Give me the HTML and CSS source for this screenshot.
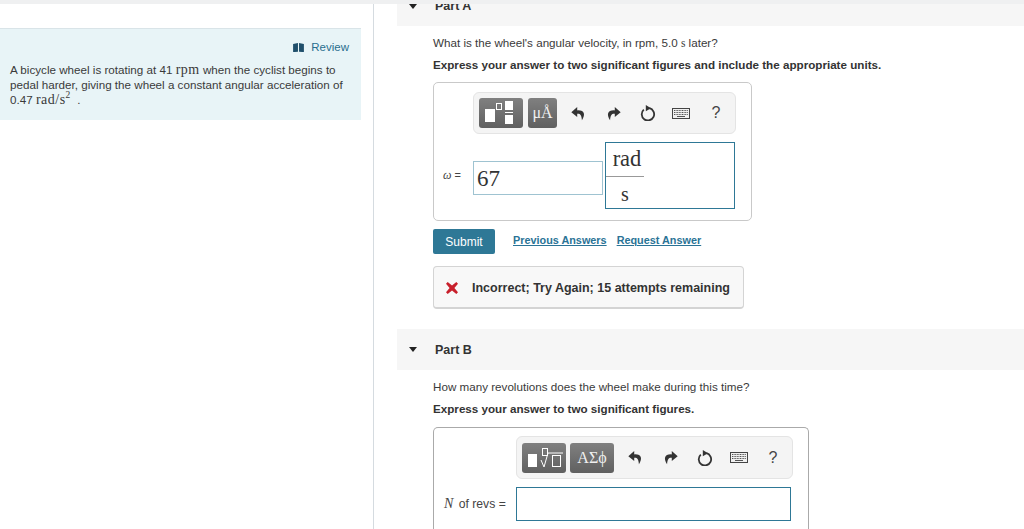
FILE: index.html
```html
<!DOCTYPE html>
<html lang="en">
<head>
<meta charset="utf-8">
<title>Bicycle wheel</title>
<link rel="stylesheet" href="styles.css">
</head>
<body>
<svg class="defs" width="0" height="0" aria-hidden="true">
  <symbol id="undo" viewBox="0 0 14 14"><path d="M5.8 1 0.3 5.8 5.8 10.2V7.3C8.6 7 9.8 8.6 10.2 13.2 13.8 8.2 12.6 3.6 5.8 4.1Z"/></symbol>
  <symbol id="redo" viewBox="0 0 14 14"><path d="M8.2 1 13.7 5.8 8.2 10.2V7.3C5.4 7 4.2 8.6 3.8 13.2 0.2 8.2 1.4 3.6 8.2 4.1Z"/></symbol>
  <symbol id="reset" viewBox="0 0 16 16"><path class="ring" d="M9.4 3.2A6.2 6.2 0 1 1 3.8 4.6"/><path d="M5.8 0 11 3.3 5.8 6.2Z"/></symbol>
  <symbol id="keys" viewBox="0 0 18 11"><rect class="kb" x="0.5" y="0.5" width="17" height="10"/><path class="kr" d="M2 2.5H16M2 4.5H16M2 6.5H16"/><path class="ks" d="M5 8.5H13"/></symbol>
</svg>
<div class="page">
  <aside class="left">
    <section class="intro">
      <div class="review"><svg class="book" viewBox="0 0 12 10"><path d="M0 1 5.4 0V9.6L0 10.2ZM6.6 0 12 1V10.2L6.6 9.6Z"/></svg><span>Review</span></div>
      <p class="problem">A bicycle wheel is rotating at 41 <span class="math">rpm</span> when the cyclist begins to pedal harder, giving the wheel a constant angular acceleration of 0.47 <span class="math">rad/s<sup>2</sup></span> &nbsp;.</p>
    </section>
  </aside>
  <main class="right">
    <header class="part part-a"><span class="caret"></span><h2>Part A</h2></header>
    <div class="body body-a">
      <p class="q">What is the wheel's angular velocity, in rpm, 5.0 <span class="math">s</span> later?</p>
      <p class="req">Express your answer to two significant figures and include the appropriate units.</p>
      <div class="answer answer-a">
        <div class="tools tools-a">
          <span class="tbtn btn-frac"><svg width="44" height="30" viewBox="0 0 44 30"><rect class="w" x="6" y="11" width="10" height="13"/><rect class="o" x="17.5" y="5.5" width="5" height="6"/><rect class="w" x="26" y="3" width="8" height="9"/><rect class="w" x="26" y="14" width="8" height="1"/><rect class="w" x="26" y="17" width="8" height="9"/></svg></span>
          <span class="tbtn btn-sym">μÅ</span>
          <span class="acts">
            <svg class="ic"><use href="#undo"/></svg>
            <svg class="ic"><use href="#redo"/></svg>
            <svg class="ic ic-r"><use href="#reset"/></svg>
            <svg class="ic-k"><use href="#keys"/></svg>
            <span class="help">?</span>
          </span>
        </div>
        <div class="entry">
          <span class="lbl lbl-w"><i>ω</i> =</span>
          <span class="val">67</span>
          <div class="units">
            <span class="fr"><span class="num">rad</span><span class="den">s</span></span>
          </div>
        </div>
      </div>
      <div class="actions">
        <button class="submit" type="button">Submit</button>
        <a class="lnk" href="#">Previous Answers</a>
        <a class="lnk" href="#">Request Answer</a>
      </div>
      <div class="fb"><svg class="x" viewBox="0 0 12 12"><path d="M1.7 0 6 3.6 10.3 0 12 1.8 8.4 6 12 10.2 10.3 12 6 8.4 1.7 12 0 10.2 3.6 6 0 1.8Z"/></svg><strong>Incorrect; Try Again; 15 attempts remaining</strong></div>
    </div>
    <header class="part part-b"><span class="caret"></span><h2>Part B</h2></header>
    <div class="body body-b">
      <p class="q">How many revolutions does the wheel make during this time?</p>
      <p class="req">Express your answer to two significant figures.</p>
      <div class="answer answer-b">
        <div class="tools tools-b">
          <span class="tbtn btn-frac"><svg width="44" height="30" viewBox="0 0 44 30"><rect class="w" x="6" y="11" width="9" height="13"/><rect class="o" x="20.5" y="5.5" width="5" height="7"/><path class="o" d="M19 17 22 24 26 10H41"/><rect class="o" x="30.5" y="12.5" width="8" height="11"/></svg></span>
          <span class="tbtn btn-sym btn-greek">ΑΣϕ</span>
          <span class="acts">
            <svg class="ic"><use href="#undo"/></svg>
            <svg class="ic"><use href="#redo"/></svg>
            <svg class="ic ic-r"><use href="#reset"/></svg>
            <svg class="ic-k"><use href="#keys"/></svg>
            <span class="help">?</span>
          </span>
        </div>
        <div class="entry entry-b">
          <span class="lbl lbl-n"><i class="n">N</i> of revs =</span>
          <span class="val val-b"></span>
        </div>
      </div>
    </div>
  </main>
</div>
</body>
</html>
```
FILE: styles.css
```css
* { box-sizing: border-box; }
html, body { margin: 0; height: 529px; overflow: hidden; background: #fff; }
body { font-family: "Liberation Sans", Arial, sans-serif; color: #333; font-size: 11.65px; }
.defs { display: block; height: 0; }
p, h2 { margin: 0; }
.page { display: flex; height: 529px; border-top: 4px solid #eff0f1; }
.left { width: 374px; flex: none; padding-top: 24px; border-right: 1px solid #d5dbe0; }
.intro { width: 361px; height: 92px; background: #e8f4f7; border-top: 1px solid #d9e4e8; padding: 11px 12px 0 10px; }
.review { display: flex; justify-content: flex-end; align-items: center; gap: 7px; color: #2a6f8f; height: 14px; font-size: 11.5px; }
.book { width: 11px; height: 9px; fill: #1f4f6b; }
.problem { margin-top: 9px; line-height: 14.8px; font-size: 11.65px; width: 340px; color: #3a3a3a; }
.math { font-family: "Liberation Serif", "DejaVu Serif", serif; font-size: 14px; letter-spacing: .5px; line-height: 1; }
sup { font-size: 9.5px; line-height: 0; }
.right { flex: 1; min-width: 0; padding-left: 23px; }
.part { display: flex; align-items: center; background: #f6f6f6; color: #333; }
.part h2 { font-size: 12.5px; font-weight: bold; margin-left: 18px; }
.caret { width: 0; height: 0; border-left: 4.5px solid transparent; border-right: 4.5px solid transparent; border-top: 5px solid #222; margin-left: 12px; }
.part-a { height: 22px; overflow: hidden; align-items: flex-start; }
.part-a h2 { margin-top: -5px; }
.part-b { height: 41px; margin-top: 20px; }
.body { padding-left: 36px; }
.body-a { padding-top: 10px; }
.q { font-size: 11.65px; line-height: 14px; color: #3a3a3a; }
.q .math { font-size: 11.5px; letter-spacing: 0; }
.req { font-size: 11.65px; font-weight: bold; line-height: 14px; margin-top: 8px; color: #333; }
.answer { border: 1px solid #c9c9c9; border-radius: 5px; background: #fff; }
.answer-a { width: 319px; height: 139px; margin-top: 10px; padding: 9px 0 0 39px; }
.tools { display: flex; align-items: center; height: 42px; background: #f4f4f4; border: 1px solid #e4e4e4; border-radius: 6px; padding-left: 5px; gap: 5px; }
.tools-a { width: 263px; }
.tbtn { display: flex; align-items: center; justify-content: center; height: 30px; border-radius: 3px; background: linear-gradient(#808080, #606060); color: #f0f0f0; }
.btn-frac { width: 44px; }
.btn-sym { width: 29px; font-family: "Liberation Serif", serif; font-size: 16px; }
.btn-greek { width: 44px; }
.w { fill: #fff; }
.o { fill: none; stroke: #fff; stroke-width: 1; }
.acts { display: flex; align-items: center; margin-left: 9px; }
.ic { width: 15px; height: 15px; fill: #333; margin-right: 19.5px; }
.ic-r { width: 16px; height: 16px; margin-right: 16px; }
.ring { fill: none; stroke: #333; stroke-width: 1.8; }
.ic-k { width: 18px; height: 11px; margin-right: 21.5px; }
.kb { fill: #f0f0f0; stroke: #444; stroke-width: 1; }
.kr { fill: none; stroke: #555; stroke-width: 1; stroke-dasharray: 1 .6; }
.ks { fill: none; stroke: #555; stroke-width: 1; }
.help { font-size: 16px; color: #444; }
.entry { display: flex; align-items: center; margin-top: 8px; margin-left: -30px; height: 67px; }
.lbl { font-size: 11px; color: #444; white-space: nowrap; }
.lbl-w { width: 30px; }
.lbl-w i { font-family: "Liberation Serif", serif; font-size: 12px; }
.val { width: 130px; height: 34px; align-self: flex-start; margin-top: 19px; border: 1px solid #9fc3d1; font-family: "Liberation Serif", serif; font-size: 23px; line-height: 34px; padding-left: 3px; color: #333; display: block; }
.units { width: 130px; height: 67px; margin-left: 2px; border: 1px solid #2e7896; }
.fr { display: flex; flex-direction: column; width: 38px; font-family: "Liberation Serif", serif; color: #333; align-items: center; }
.num { font-size: 22.5px; line-height: 31px; height: 34px; width: 38px; text-align: center; padding-left: 4px; border-bottom: 1px solid #999; }
.den { font-size: 20px; line-height: 34px; }
.actions { display: flex; align-items: center; margin-top: 8px; height: 25px; }
.submit { width: 62px; height: 25px; border: 0; border-radius: 2px; background: #2e7896; color: #fff; font: 12px "Liberation Sans", sans-serif; padding: 0; }
.lnk { color: #2a7396; font-size: 10.85px; font-weight: bold; text-decoration: underline; margin-left: 18px; margin-top: -3px; }
.lnk + .lnk { margin-left: 10px; }
.fb { display: flex; align-items: center; width: 311px; height: 43px; margin-top: 12px; padding-top: 1px; background: #f8f8f8; border: 1px solid #d4d4d4; border-bottom-width: 2px; border-radius: 4px; padding-left: 12px; }
.x { width: 12px; height: 12px; fill: #c8202c; margin-right: 14px; }
.fb strong { font-size: 12.5px; color: #333; }
.body-b { padding-top: 10px; }
.answer-b { width: 376px; height: 102px; margin-top: 11px; padding: 8px 0 0 82px; border-bottom: 0; border-radius: 5px 5px 0 0; border-color: #aaa; }
.tools-b { width: 277px; height: 43px; gap: 4px; }
.tools-b .acts { margin-left: 10px; }
.tools-b .ic-r { margin-right: 17px; }
.tools-b .ic-k { margin-right: 20.5px; }
.entry-b { margin-left: -72px; margin-top: 8px; height: 34px; }
.lbl-n { width: 72px; font-size: 12.2px; }
.n { font-family: "Liberation Serif", serif; font-size: 14px; margin-right: 2px; }
.val-b { width: 275px; height: 34px; margin-top: 0; border: 1px solid #2e7896; }
```
